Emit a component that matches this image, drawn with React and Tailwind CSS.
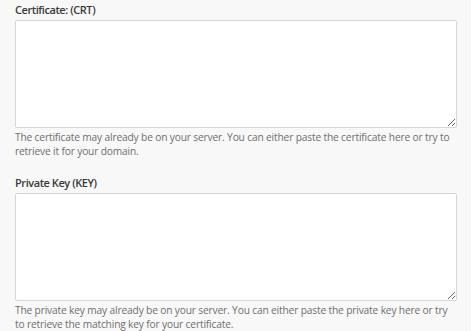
import React from 'react'

const Field = ({ label, help }) => (
  <div className="flex flex-col">
    <label className="text-[11px] leading-[16px] font-semibold tracking-[-0.04em] text-[#3a3a3a]">{label}</label>
    <textarea className="mt-[2px] h-[108px] w-full bg-white border border-[#d6d6d6] rounded-[2px] outline-none" />
    <p className="mt-[2px] text-[10.2px] leading-[14px] tracking-[-0.015em] text-[#6e6e6e]">{help}</p>
  </div>
)

const App = () => {
  return (
    <div className="flex w-[474px] h-[331px] bg-white" style={{ fontFamily: '"Open Sans", sans-serif' }}>
      <div className="w-[471px] h-full bg-[#f8f8f8] pl-[15px] pr-[14px] pt-[2px] flex flex-col gap-[17px]">
        <Field
          label="Certificate: (CRT)"
          help="The certificate may already be on your server. You can either paste the certificate here or try to retrieve it for your domain."
        />
        <Field
          label="Private Key (KEY)"
          help="The private key may already be on your server. You can either paste the private key here or try to retrieve the matching key for your certificate."
        />
      </div>
    </div>
  )
}

export default App
